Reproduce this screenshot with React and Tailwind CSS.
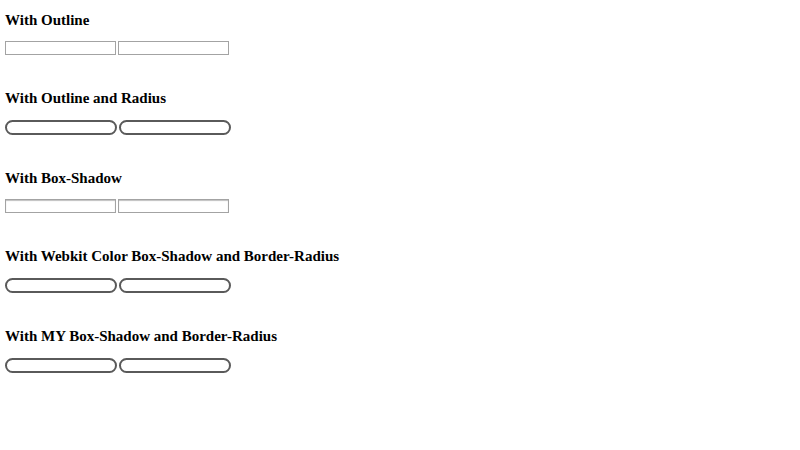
import React from 'react'

const sections = [
  { title: 'With Outline', kind: 'plain' },
  { title: 'With Outline and Radius', kind: 'round' },
  { title: 'With Box-Shadow', kind: 'shadow' },
  { title: 'With Webkit Color Box-Shadow and Border-Radius', kind: 'round' },
  { title: 'With MY Box-Shadow and Border-Radius', kind: 'round' },
]

const INPUT = {
  plain: 'w-[111px] h-[14px] border border-[#a3a3a3] bg-white',
  round: 'w-[112px] h-[15px] border-2 border-[#5a5a5a] rounded-[8px] bg-white',
  shadow: 'w-[111px] h-[14px] border border-[#a3a3a3] bg-white shadow-[inset_0_1px_1px_rgba(0,0,0,0.25)]',
}

export default function App() {
  return (
    <div className="min-h-[450px] bg-white px-[5px] text-black" style={{ fontFamily: '"Liberation Serif", "Times New Roman", serif' }}>
      {sections.map((s, i) => (
        <div key={i} className={i === 0 ? 'pt-[12px]' : 'pt-[35px]'}>
          <h3 className="text-[15px] font-bold leading-[17px]">{s.title}</h3>
          <div className={`flex gap-[2px] ${s.kind === 'round' ? 'pt-[13px]' : 'pt-[12px]'}`}>
            <input className={INPUT[s.kind]} />
            <input className={INPUT[s.kind]} />
          </div>
        </div>
      ))}
    </div>
  )
}
